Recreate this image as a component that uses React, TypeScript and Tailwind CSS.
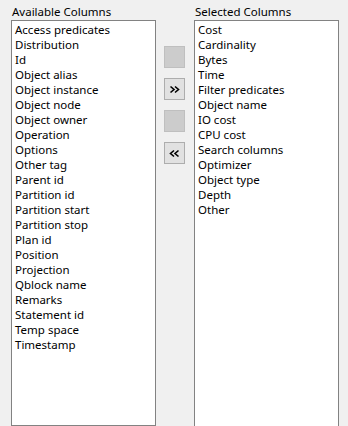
const AVAILABLE = [
  "Access predicates",
  "Distribution",
  "Id",
  "Object alias",
  "Object instance",
  "Object node",
  "Object owner",
  "Operation",
  "Options",
  "Other tag",
  "Parent id",
  "Partition id",
  "Partition start",
  "Partition stop",
  "Plan id",
  "Position",
  "Projection",
  "Qblock name",
  "Remarks",
  "Statement id",
  "Temp space",
  "Timestamp"
];

const SELECTED = [
  "Cost",
  "Cardinality",
  "Bytes",
  "Time",
  "Filter predicates",
  "Object name",
  "IO cost",
  "CPU cost",
  "Search columns",
  "Optimizer",
  "Object type",
  "Depth",
  "Other"
];

function ListColumn({ title, items }: { title: string; items: string[] }) {
  return (
    <div className="flex w-[145px] flex-col">
      <div className="h-[20px] pt-[5px] pl-[1px] text-[11.5px] leading-[14px] text-black">{title}</div>
      <ul className="m-0 h-[420px] list-none border border-[#828282] bg-white px-[3px] py-[1px]">
        {items.map((it) => (
          <li key={it} className="h-[15px] whitespace-nowrap text-[11.5px] leading-[15px] text-black">
            {it}
          </li>
        ))}
      </ul>
    </div>
  );
}

function Chevrons({ dir }: { dir: "right" | "left" }) {
  const d =
    dir === "right"
      ? "M1.5 1.5 L5 4.5 L1.5 7.5 M6 1.5 L9.5 4.5 L6 7.5"
      : "M9.5 1.5 L6 4.5 L9.5 7.5 M5 1.5 L1.5 4.5 L5 7.5";
  return (
    <svg width="11" height="9" viewBox="0 0 11 9" fill="none" stroke="#000" strokeWidth="1.6">
      <path d={d} />
    </svg>
  );
}

function MoveButton({ dir }: { dir?: "right" | "left" }) {
  return (
    <button
      className={
        dir
          ? "flex h-[22px] w-[21px] items-center justify-center border border-[#adadad] bg-[#e1e1e1]"
          : "flex h-[22px] w-[21px] items-center justify-center border border-[#bfbfbf] bg-[#cccccc]"
      }
    >
      {dir ? <Chevrons dir={dir} /> : null}
    </button>
  );
}

export default function App() {
  return (
    <div
      className="flex h-[426px] w-[348px] overflow-hidden bg-[#f0f0f0] pl-[11px]"
      style={{ fontFamily: '"Noto Sans", "Open Sans", sans-serif' }}
    >
      <ListColumn title="Available Columns" items={AVAILABLE} />
      <div className="ml-[8px] flex w-[21px] flex-col gap-[10px] pt-[46px]">
        <MoveButton />
        <MoveButton dir="right" />
        <MoveButton />
        <MoveButton dir="left" />
      </div>
      <div className="ml-[9px]">
        <ListColumn title="Selected Columns" items={SELECTED} />
      </div>
    </div>
  );
}
